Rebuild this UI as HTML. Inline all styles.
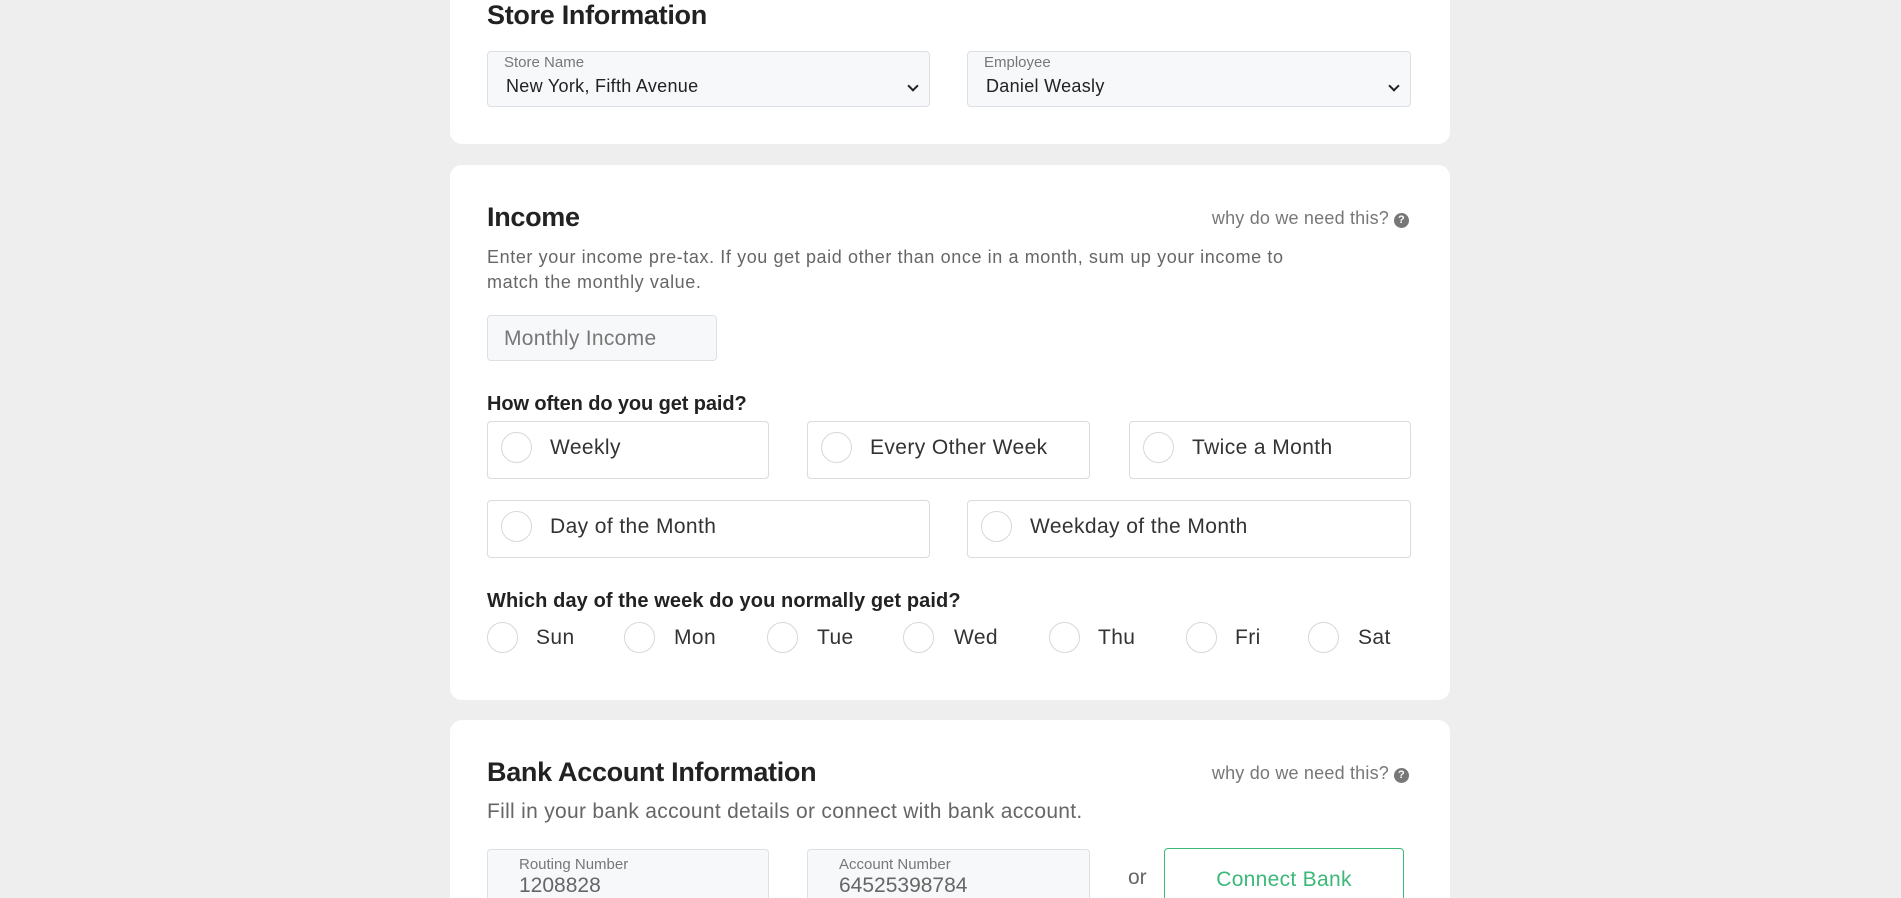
<!DOCTYPE html>
<html><head><meta charset="utf-8"><style>
*{box-sizing:border-box;margin:0;padding:0}
html{width:1901px;height:898px;overflow:hidden}
body{width:1901px;height:898px;background:#eeeeee;font-family:"Liberation Sans",sans-serif;position:relative;overflow:hidden;color:#222}
.card{position:absolute;left:450px;width:1000px;background:#fff;border-radius:12px}
.a{position:absolute;white-space:nowrap}
.sel{position:absolute;background:#f7f8f9;border:1px solid #dcdfe3;border-radius:4px}
.sel .l{position:absolute;left:16px;top:2px;font-size:15px;color:#777}
.sel .v{position:absolute;left:18px;top:24px;font-size:18px;color:#222;letter-spacing:0.3px}
.chev{position:absolute;right:12px;top:30px;width:8px;height:8px;border-right:2px solid #222;border-bottom:2px solid #222;transform:rotate(45deg)}
.opt{position:absolute;border:1px solid #d8dbe0;border-radius:4px;background:#fff}
.opt .c{position:absolute;left:13px;top:10px;width:31px;height:31px;border:1px solid #d5d8dc;border-radius:50%}
.opt .t{position:absolute;left:62px;top:14px;font-size:21px;color:#333;letter-spacing:0.4px}
.dc{position:absolute;top:622px;width:31px;height:31px;border:1px solid #d5d8dc;border-radius:50%}
.dt{position:absolute;top:626px;font-size:21px;color:#333;letter-spacing:0.4px}
.why{font-size:18px;color:#777;letter-spacing:0.2px}
.q{display:inline-block;width:15px;height:15px;border-radius:50%;background:#777;color:#fff;font-size:11px;font-weight:bold;text-align:center;line-height:15px;vertical-align:1px;margin-left:5px}
.h{font-size:27px;color:#222;font-weight:bold;letter-spacing:-0.3px}
</style></head><body>
<div class="card" style="top:-20px;height:164px"></div>
<div class="card" style="top:165px;height:535px"></div>
<div class="card" style="top:720px;height:178px;border-radius:12px 12px 0 0"></div>

<div class="a h" style="left:487px;top:0px">Store Information</div>
<div class="sel" style="left:487px;top:51px;width:443px;height:56px"><span class="l">Store Name</span><span class="v">New York, Fifth Avenue</span><i class="chev"></i></div>
<div class="sel" style="left:967px;top:51px;width:444px;height:56px"><span class="l">Employee</span><span class="v">Daniel Weasly</span><i class="chev"></i></div>

<div class="a h" style="left:487px;top:202px">Income</div>
<div class="a why" style="right:492px;top:208px">why do we need this?<span class="q">?</span></div>
<div class="a" style="left:487px;top:245px;font-size:18px;line-height:25px;color:#666;letter-spacing:0.6px">Enter your income pre-tax. If you get paid other than once in a month, sum up your income to<br>match the monthly value.</div>
<div class="sel" style="left:487px;top:315px;width:230px;height:46px"><span class="a" style="left:16px;top:11px;font-size:21px;color:#777;letter-spacing:0.3px">Monthly Income</span></div>

<div class="a" style="left:487px;top:393px;font-size:20px;font-weight:bold;letter-spacing:-0.1px">How often do you get paid?</div>
<div class="opt" style="left:487px;top:421px;width:282px;height:58px"><i class="c"></i><span class="t">Weekly</span></div>
<div class="opt" style="left:807px;top:421px;width:283px;height:58px"><i class="c"></i><span class="t">Every Other Week</span></div>
<div class="opt" style="left:1129px;top:421px;width:282px;height:58px"><i class="c"></i><span class="t">Twice a Month</span></div>
<div class="opt" style="left:487px;top:500px;width:443px;height:58px"><i class="c"></i><span class="t">Day of the Month</span></div>
<div class="opt" style="left:967px;top:500px;width:444px;height:58px"><i class="c"></i><span class="t">Weekday of the Month</span></div>

<div class="a" style="left:487px;top:590px;font-size:20px;font-weight:bold;letter-spacing:0.1px">Which day of the week do you normally get paid?</div>
<i class="dc" style="left:487px"></i><span class="dt" style="left:536px">Sun</span>
<i class="dc" style="left:624px"></i><span class="dt" style="left:674px">Mon</span>
<i class="dc" style="left:767px"></i><span class="dt" style="left:817px">Tue</span>
<i class="dc" style="left:903px"></i><span class="dt" style="left:954px">Wed</span>
<i class="dc" style="left:1049px"></i><span class="dt" style="left:1098px">Thu</span>
<i class="dc" style="left:1186px"></i><span class="dt" style="left:1235px">Fri</span>
<i class="dc" style="left:1308px"></i><span class="dt" style="left:1358px">Sat</span>

<div class="a h" style="left:487px;top:757px">Bank Account Information</div>
<div class="a why" style="right:492px;top:763px">why do we need this?<span class="q">?</span></div>
<div class="a" style="left:487px;top:800px;font-size:21px;color:#666;letter-spacing:0.3px">Fill in your bank account details or connect with bank account.</div>
<div class="sel" style="left:487px;top:849px;width:282px;height:70px"><span class="a" style="left:31px;top:6px;font-size:15px;color:#777">Routing Number</span><span class="a" style="left:31px;top:24px;font-size:21px;color:#666">1208828</span></div>
<div class="sel" style="left:807px;top:849px;width:283px;height:70px"><span class="a" style="left:31px;top:6px;font-size:15px;color:#777">Account Number</span><span class="a" style="left:31px;top:24px;font-size:21px;color:#666">64525398784</span></div>
<div class="a" style="left:1128px;top:866px;font-size:21px;color:#666">or</div>
<div class="a" style="left:1164px;top:848px;width:240px;height:70px;border:1px solid #3cb878;border-radius:4px;color:#3cb878;font-size:21px;text-align:center;padding-top:19px;letter-spacing:0.3px">Connect Bank</div>
</body></html>
